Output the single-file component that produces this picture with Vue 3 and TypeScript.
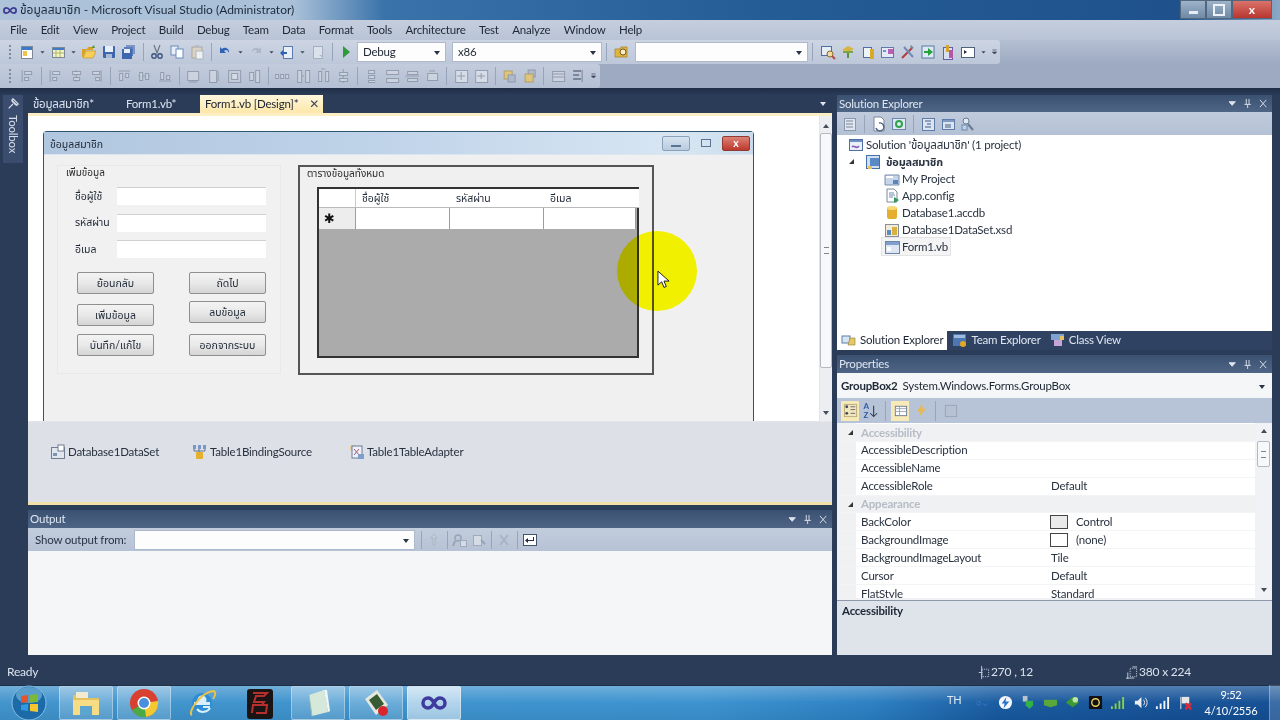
<script setup lang="ts">
const line = (x1: number, y1: number, x2: number, y2: number, c = '#7c8798', w = 1) =>
  `<path d="M${x1} ${y1}L${x2} ${y2}" stroke="${c}" stroke-width="${w}" fill="none"/>`
const box = (x: number, y: number, w: number, h: number, f = '#fff', s = '#7c8798') =>
  `<rect x="${x + 0.5}" y="${y + 0.5}" width="${w}" height="${h}" fill="${f}" stroke="${s}"/>`

const icons: Record<string, string> = {
  grip: line(8, 3, 8, 13, '#8a96aa', 2),
  dd: '<path d="M5 7h6l-3 3z" fill="#39455a"/>',
  sep: '',
  new: box(2, 2, 11, 12) + '<rect x="3" y="3" width="10" height="3" fill="#3d7cc4"/><rect x="4" y="7" width="4" height="5" fill="#f2c14e"/>',
  add: box(2, 3, 12, 10, '#f5f2c8') + '<rect x="3" y="4" width="11" height="2" fill="#3d7cc4"/>' + line(6, 6, 6, 13, '#a9b56a') + line(10, 6, 10, 13, '#a9b56a') + line(3, 9, 14, 9, '#a9b56a'),
  open: '<path d="M1 5h5l1-2h5v3H5L2 13H1z" fill="#d9a32a"/><path d="M5 7h10l-3 7H2z" fill="#f7cf57" stroke="#c08e20" stroke-width=".6"/><path d="M10 4l3-3 1 3z" fill="#5a9a3c"/>',
  save: '<rect x="2" y="2" width="12" height="12" rx="1" fill="#3e66ae"/><rect x="4" y="2" width="8" height="6" fill="#e8eef8"/><rect x="5" y="10" width="6" height="4" fill="#a8bcd8"/>',
  saveall: '<rect x="5" y="1" width="9" height="9" fill="#7d95c4"/><rect x="3" y="3" width="9" height="9" fill="#5a7dbc"/><rect x="1" y="5" width="10" height="10" fill="#3e66ae"/><rect x="3" y="5" width="6" height="4" fill="#e8eef8"/>',
  cut: '<path d="M5 1l3 8 3-8" stroke="#6d7787" stroke-width="1.2" fill="none"/><circle cx="5" cy="12" r="2.2" fill="none" stroke="#3b557f" stroke-width="1.4"/><circle cx="11" cy="12" r="2.2" fill="none" stroke="#3b557f" stroke-width="1.4"/>',
  copy: '<rect x="2" y="2" width="7" height="9" fill="#e9eef6" stroke="#6b8bbd"/><rect x="7" y="5" width="7" height="9" fill="#fff" stroke="#6b8bbd"/>',
  paste: '<rect x="3" y="3" width="10" height="11" fill="#d9d3c2" stroke="#a9a89f"/><rect x="6" y="1" width="4" height="3" fill="#b9bcc3"/><rect x="7" y="7" width="7" height="8" fill="#eef0f4" stroke="#aeb3bd"/>',
  undo: '<path d="M3 3v6h6L7 7c2-2 4-1 5 2 1-4-4-7-7-4z" fill="#2f62b3"/>',
  redo: '<path d="M13 3v6H7l2-2c-2-2-4-1-5 2-1-4 4-7 7-4z" fill="#aeb7c6"/>',
  nav: box(4, 2, 9, 12, '#e9eef7', '#5a7bb0') + '<path d="M1 9l3-3v2h4v2H4v2z" fill="#2f62b3"/>',
  page: box(3, 2, 9, 12, '#dce2ec', '#a6afbf') + '<path d="M9 11l4 3v-3z" fill="#aeb7c6"/>',
  play: '<path d="M5 2l7 6-7 6z" fill="#2f9a3a"/>',
  find: '<path d="M1 5h5l1-2h6v10H1z" fill="#e2b53e" stroke="#a37c1c" stroke-width=".7"/><circle cx="9" cy="8" r="3" fill="#f7ecc0" stroke="#6d5a28"/>',
  tools1: box(1, 2, 10, 9, '#e6edf7', '#4f6ea5') + '<circle cx="10" cy="10" r="3" fill="#f3d9a0" stroke="#8a6a2a"/>' + line(12, 12, 15, 15, '#b54a4a', 2),
  tools2: '<path d="M2 6l6-4 6 3-6 3z" fill="#d8b53c"/><rect x="7" y="7" width="2" height="7" fill="#5f8f3a"/><rect x="3" y="7" width="10" height="2" fill="#7aa34a"/>',
  tools3: box(3, 3, 8, 10, '#eef2f9', '#4f6ea5') + '<rect x="10" y="5" width="4" height="10" fill="#d8aa2c"/>',
  tools4: box(1, 3, 12, 10, '#e4e9f5', '#5f79ad') + '<path d="M8 5h5v5H8z" fill="#b761b6"/><path d="M3 6h3v2H3z" fill="#5a9ad3"/>',
  tools5: '<path d="M2 14L12 4" stroke="#b23b3b" stroke-width="2"/><path d="M4 3l9 10" stroke="#6f8bb5" stroke-width="2"/><path d="M11 1l3 3-2 1-2-2z" fill="#7d8897"/>',
  tools6: '<rect x="2" y="2" width="12" height="12" fill="#dfe8f3" stroke="#537aa8"/><path d="M4 7h4V4l5 4-5 4V9H4z" fill="#27a13a"/>',
  tools7: box(3, 3, 9, 12, '#d7e0ef', '#6b5aa5') + '<rect x="6" y="1" width="3" height="7" fill="#d6a52e"/><rect x="9" y="6" width="4" height="8" fill="#b257a8"/>',
  tools8: box(1, 3, 13, 10, '#fff', '#51617c') + '<path d="M4 6l3 2-3 2z" fill="#222c3c"/>',
  chev: '<path d="M5 5h6M5 8h6l-3 3z" stroke="#39455a" fill="#39455a"/>',
  al1: line(3, 2, 3, 14) + box(5, 3, 7, 3, '#d4dae4') + box(5, 9, 4, 3, '#d4dae4'),
  al2: line(8, 2, 8, 14) + box(4, 3, 8, 3, '#d4dae4') + box(5, 9, 6, 3, '#d4dae4'),
  al3: line(13, 2, 13, 14) + box(4, 3, 7, 3, '#d4dae4') + box(7, 9, 4, 3, '#d4dae4'),
  al4: line(2, 3, 14, 3) + box(3, 5, 3, 7, '#d4dae4') + box(9, 5, 3, 4, '#d4dae4'),
  al5: line(2, 8, 14, 8) + box(3, 4, 3, 8, '#d4dae4') + box(9, 5, 3, 6, '#d4dae4'),
  al6: line(2, 13, 14, 13) + box(3, 4, 3, 7, '#d4dae4') + box(9, 7, 3, 4, '#d4dae4'),
  sz1: box(2, 3, 11, 9, '#d4dae4') + line(4, 14, 12, 14),
  sz2: box(4, 2, 7, 12, '#d4dae4') + line(13, 3, 13, 13),
  sz3: box(2, 2, 12, 12, '#c9d0dc') + box(5, 5, 6, 6, '#e4e8ef'),
  gr: box(3, 4, 4, 8, '#d4dae4') + box(9, 2, 4, 12, '#d4dae4'),
  sp1: box(1, 6, 3, 4, '#d4dae4') + box(6, 6, 3, 4, '#d4dae4') + box(11, 6, 3, 4, '#d4dae4'),
  sp2: box(2, 2, 4, 12, '#d4dae4') + box(10, 2, 4, 12, '#d4dae4') + line(7, 8, 9, 8),
  sp3: box(3, 3, 3, 10, '#d4dae4') + box(10, 3, 3, 10, '#d4dae4') + line(6, 1, 10, 1),
  sp4: line(8, 1, 8, 15) + box(4, 4, 8, 3, '#d4dae4') + box(4, 10, 8, 3, '#d4dae4'),
  vs1: box(5, 2, 6, 3, '#d4dae4') + box(5, 7, 6, 3, '#d4dae4') + box(5, 12, 6, 2, '#d4dae4'),
  vs2: box(2, 2, 12, 4, '#d4dae4') + box(2, 10, 12, 4, '#d4dae4'),
  vs3: box(3, 3, 10, 3, '#d4dae4') + box(3, 10, 10, 3, '#d4dae4') + line(1, 8, 15, 8),
  vs4: box(3, 5, 10, 7, '#d4dae4') + line(5, 3, 11, 3),
  cen1: box(2, 2, 12, 12, '#e6eaf1') + line(8, 4, 8, 12) + line(4, 8, 12, 8),
  cen2: box(2, 2, 12, 12, '#e6eaf1') + line(4, 8, 12, 8) + line(8, 5, 8, 11),
  ord1: '<rect x="3" y="3" width="8" height="8" fill="#f0c64a" stroke="#ac8a2e"/><rect x="7" y="7" width="7" height="7" fill="#a8b4c8" stroke="#75829a"/>',
  ord2: '<rect x="6" y="2" width="7" height="7" fill="#a8b4c8" stroke="#75829a"/><rect x="3" y="6" width="8" height="8" fill="#f0c64a" stroke="#ac8a2e"/>',
  tab: box(2, 3, 12, 10, '#d4dae4') + line(2, 6, 14, 6) + line(2, 9, 14, 9),
  tab2: line(3, 3, 11, 3, '#57647a', 2) + line(3, 7, 9, 7, '#57647a', 2) + line(3, 11, 11, 11, '#57647a', 2) + line(12, 2, 12, 14, '#57647a'),
  props: box(2, 2, 11, 12, '#dfe6f1', '#8a98ae') + line(4, 5, 11, 5) + line(4, 8, 11, 8) + line(4, 11, 11, 11),
  se2: '<path d="M3 1h7l3 3v11H3z" fill="#fff" stroke="#7c8798"/><path d="M8 7a4 4 0 1 1-3 5" stroke="#50658a" fill="none" stroke-width="1.5"/>',
  se3: box(1, 2, 13, 11, '#dfe9f3', '#6c87ae') + '<circle cx="8" cy="8" r="3" fill="none" stroke="#31a24c" stroke-width="2"/>',
  se4: box(2, 2, 12, 12, '#dbe4f1', '#5f7ca8') + line(5, 5, 11, 5, '#445c82') + line(7, 8, 11, 8, '#445c82') + line(5, 11, 11, 11, '#445c82'),
  se5: box(2, 3, 12, 10, '#dbe4f1', '#5f7ca8') + '<rect x="3" y="4" width="11" height="2" fill="#7f99c2"/>' + line(5, 9, 11, 9, '#445c82') + line(5, 11, 11, 11, '#445c82'),
  se6: '<circle cx="6" cy="5" r="3" fill="#dfe9f3" stroke="#6c7a90"/>' + line(8, 8, 13, 14, '#6c7a90', 2) + '<rect x="2" y="9" width="5" height="5" fill="#bcd0e8" stroke="#6c87ae"/>',
  sln: box(1, 2, 13, 11, '#e9f0fa', '#4f6f9e') + '<rect x="2" y="3" width="12" height="2" fill="#6b8fc4"/><path d="M4 10c2-3 4 3 7-1" stroke="#8c5fb6" fill="none" stroke-width="1.6"/>',
  vb: box(1, 1, 13, 13, '#cfe0f4', '#446fa8') + '<rect x="5" y="4" width="9" height="8" fill="#5a89c6"/><rect x="3" y="12" width="4" height="3" fill="#e8c35a"/>',
  myproj: '<path d="M1 4h14v10H1z" fill="#c6d5ea" stroke="#7d90ad"/><rect x="2" y="5" width="7" height="2" fill="#fff"/><rect x="9" y="9" width="5" height="4" fill="#5d84bb"/>',
  cfg: '<path d="M3 1h7l3 3v10H3z" fill="#fff" stroke="#7c8798"/>' + line(5, 5, 10, 5, '#6d89b3') + line(5, 7, 11, 7, '#6d89b3') + line(5, 9, 9, 9, '#6d89b3') + '<path d="M10 9l5 3-5 3z" fill="#2f9a5a"/>',
  db: '<rect x="3" y="2" width="10" height="12" rx="2" fill="#e6ae2e"/><ellipse cx="8" cy="3" rx="5" ry="2" fill="#f6d875"/>',
  xsd: box(1, 2, 13, 12, '#f0ecd8', '#8a8f9d') + '<rect x="3" y="8" width="4" height="5" fill="#5b8bc4"/><rect x="8" y="5" width="5" height="8" fill="#d8b13e"/>',
  form: box(1, 2, 14, 12, '#dde6f2', '#6b86ad') + '<rect x="2" y="3" width="13" height="3" fill="#7fa0cc"/><rect x="3" y="8" width="4" height="4" fill="#fff"/>',
  seTab: '<rect x="1" y="4" width="8" height="7" fill="#d7e4f2" stroke="#5d7ea9"/><path d="M9 6h5v7H7z" fill="#e6c867" stroke="#8d7a36" stroke-width=".6"/>',
  teamTab: '<rect x="1" y="2" width="13" height="12" fill="#4c77b4"/><rect x="2" y="3" width="11" height="3" fill="#9fbce0"/><circle cx="11" cy="12" r="3" fill="#e2a823"/>',
  clsTab: '<rect x="1" y="2" width="13" height="6" fill="#7fa3d0"/><rect x="4" y="8" width="8" height="6" fill="#c7a3d8"/><rect x="10" y="4" width="4" height="4" fill="#e6c45a"/>',
  cat: box(1, 1, 13, 13, '#f2e6bd', '#b8ab7c') + '<circle cx="4" cy="4" r="1.5" fill="#445"/><circle cx="4" cy="11" r="1.5" fill="#445"/>' + line(8, 4, 13, 4, '#667') + line(8, 7, 13, 7, '#667') + line(8, 11, 13, 11, '#667'),
  grid: box(2, 3, 12, 10, '#fff', '#6c7a90') + line(2, 6, 14, 6, '#9aa7bb') + line(2, 9, 14, 9, '#9aa7bb') + line(7, 3, 7, 13, '#9aa7bb'),
  bolt: '<path d="M9 1L3 9h4l-2 6 8-9H9z" fill="#e9b94e"/>',
  pg: box(2, 2, 12, 12, '#b6c1d3', '#98a4b8'),
  ds: box(1, 3, 13, 11, '#e1e6ee', '#717d90') + '<rect x="8" y="1" width="6" height="6" fill="#fff" stroke="#717d90"/><rect x="3" y="9" width="4" height="3" fill="#7d93b3"/>',
  bs: '<rect x="1" y="1" width="3" height="4" fill="#7a96c7"/><rect x="6" y="1" width="3" height="4" fill="#7a96c7"/><rect x="11" y="1" width="3" height="4" fill="#7a96c7"/><path d="M2 5v2h11V5M7 5v3" stroke="#607590" fill="none"/><rect x="4" y="8" width="7" height="7" rx="1" fill="#e6b02c"/>',
  ta: '<circle cx="4" cy="4" r="3" fill="#f0c58a"/><rect x="3" y="2" width="10" height="12" fill="#eef1f8" stroke="#6b7c99"/><path d="M5 5l5 6M10 5l-5 6" stroke="#a0556a"/><rect x="9" y="10" width="6" height="5" fill="#7f9fca"/>',
  out1: '<path d="M8 2l3 4H9v7H7V6H5z" fill="#c6cedb" stroke="#a0aabb" stroke-width=".6"/>',
  out2: '<circle cx="6" cy="6" r="3" fill="none" stroke="#97a3b6" stroke-width="1.4"/>' + line(3, 9, 1, 14, '#97a3b6', 2) + box(8, 8, 6, 6, '#d6dce6', '#a0aabb'),
  out3: box(3, 3, 8, 10, '#d6dce6', '#a0aabb') + line(11, 8, 15, 12, '#97a3b6', 2),
  out4: line(4, 3, 12, 13, '#aab3c2', 2) + line(12, 3, 4, 13, '#aab3c2', 2),
  out5: box(1, 2, 13, 11, '#fff', '#44526a') + '<path d="M11 5v3H6V6L3 8.5 6 11V9h6V5z" fill="#1f2c44"/>',
}

const toolbar1 = ['new', 'dd', 'add', 'dd', 'open', 'save', 'saveall', 'sep', 'cut', 'copy', 'paste', 'sep', 'undo', 'dd', 'redo', 'dd', 'nav', 'dd', 'page', 'sep', 'play']
const toolbar1b = ['tools1', 'tools2', 'tools3', 'tools4', 'tools5', 'tools6', 'tools7', 'tools8']
const toolbar2 = ['al1', 'sep', 'al1', 'al2', 'al3', 'sep', 'al4', 'al5', 'al6', 'sep', 'sz1', 'sz2', 'sz3', 'gr', 'sep', 'sp1', 'sp2', 'sp3', 'sp4', 'sep', 'vs1', 'vs2', 'vs3', 'vs4', 'sep', 'cen1', 'cen2', 'sep', 'ord1', 'ord2', 'sep', 'tab', 'tab2']
const menu = ['File', 'Edit', 'View', 'Project', 'Build', 'Debug', 'Team', 'Data', 'Format', 'Tools', 'Architecture', 'Test', 'Analyze', 'Window', 'Help']
const seTools = ['props', 'sep', 'se2', 'se3', 'sep', 'se4', 'se5', 'se6']

const tree = [
  { icon: 'myproj', label: 'My Project', sel: false },
  { icon: 'cfg', label: 'App.config', sel: false },
  { icon: 'db', label: 'Database1.accdb', sel: false },
  { icon: 'xsd', label: 'Database1DataSet.xsd', sel: false },
  { icon: 'form', label: 'Form1.vb', sel: true },
]

const fields = ['ชื่อผู้ใช้', 'รหัสผ่าน', 'อีเมล']
const leftButtons = ['ย้อนกลับ', 'เพิ่มข้อมูล', 'บันทึก/แก้ไข']
const rightButtons = ['ถัดไป', 'ลบข้อมูล', 'ออกจากระบบ']

const trayComps = [
  { icon: 'ds', label: 'Database1DataSet' },
  { icon: 'bs', label: 'Table1BindingSource' },
  { icon: 'ta', label: 'Table1TableAdapter' },
]

type PropRow = { cat?: boolean; name: string; value?: string; swatch?: string }
const propRows: PropRow[] = [
  { cat: true, name: 'Accessibility' },
  { name: 'AccessibleDescription' },
  { name: 'AccessibleName' },
  { name: 'AccessibleRole', value: 'Default' },
  { cat: true, name: 'Appearance' },
  { name: 'BackColor', value: 'Control', swatch: 'ctl' },
  { name: 'BackgroundImage', value: '(none)', swatch: 'none' },
  { name: 'BackgroundImageLayout', value: 'Tile' },
  { name: 'Cursor', value: 'Default' },
  { name: 'FlatStyle', value: 'Standard' },
]

const taskApps = [
  { name: 'folder', on: true },
  { name: 'chrome', on: true },
  { name: 'ie', on: false },
  { name: 'game', on: false },
  { name: 'note', on: true },
  { name: 'photo', on: true },
  { name: 'vs', on: true, active: true },
]
</script>

<template>
  <div class="ide">
    <header class="titlebar">
      <svg class="vs-logo" viewBox="0 0 16 10"><path d="M4 2c2 0 3 1.500 4 3s2 3 4 3a3 3 0 0 0 0-6c-2 0-3 1.500-4 3S6 8 4 8a3 3 0 0 1 0-6z" fill="none" stroke="#3f3a94" stroke-width="2"/></svg>
      <span class="title-text">ข้อมูลสมาชิก - Microsoft Visual Studio (Administrator)</span>
      <div class="winbtns">
        <span class="wb"><i class="wb-min"></i></span>
        <span class="wb"><i class="wb-max"></i></span>
        <span class="wb wb-close">x</span>
      </div>
    </header>

    <nav class="menubar">
      <span v-for="m in menu" :key="m">{{ m }}</span>
    </nav>

    <div class="toolrow row1">
      <div class="band">
        <i class="grip"></i>
        <template v-for="(t, i) in toolbar1" :key="i">
          <i v-if="t === 'sep'" class="sep"></i>
          <svg v-else class="ic" :class="{ small: t === 'dd' }" viewBox="0 0 16 16" v-html="icons[t]"></svg>
        </template>
        <div class="combo debug">Debug<b class="arrow"></b></div>
        <div class="combo x86">x86<b class="arrow"></b></div>
        <i class="sep wide"></i>
        <svg class="ic" viewBox="0 0 16 16" v-html="icons.find"></svg>
        <div class="combo search"><b class="arrow"></b></div>
        <i class="sep wide"></i>
        <svg v-for="t in toolbar1b" :key="t" class="ic" viewBox="0 0 16 16" v-html="icons[t]"></svg>
        <svg class="ic small" viewBox="0 0 16 16" v-html="icons.dd"></svg>
        <svg class="ic small" viewBox="0 0 16 16" v-html="icons.chev"></svg>
      </div>
    </div>

    <div class="toolrow row2">
      <div class="band">
        <i class="grip"></i>
        <template v-for="(t, i) in toolbar2" :key="i">
          <i v-if="t === 'sep'" class="sep"></i>
          <svg v-else class="ic" viewBox="0 0 16 16" v-html="icons[t]"></svg>
        </template>
        <svg class="ic small" viewBox="0 0 16 16" v-html="icons.chev"></svg>
      </div>
    </div>

    <main class="workspace">
      <aside class="toolstrip">
        <div class="strip-box">
          <svg class="strip-pin" viewBox="0 0 16 16"><path d="M3 13L8 8M6 3l7 7M8 2l6 6-3 1-4-4z" stroke="#d8dfea" stroke-width="1.300" fill="none"/></svg>
          <span class="strip-label">Toolbox</span>
        </div>
      </aside>

      <section class="center">
        <div class="tabs">
          <span class="tab">ข้อมูลสมาชิก*</span>
          <span class="tab">Form1.vb*</span>
          <span class="tab active">Form1.vb [Design]*<b class="tab-x">✕</b></span>
          <i class="tab-menu"></i>
        </div>

        <div class="doc">
          <div class="designer">
            <div class="canvas">
              <div class="form">
                <div class="form-title">
                  <span>ข้อมูลสมาชิก</span>
                  <div class="form-btns">
                    <span class="fb"><i class="fb-min"></i></span>
                    <span class="fb plain"><i class="fb-max"></i></span>
                    <span class="fb close">x</span>
                  </div>
                </div>
                <div class="form-body">
                  <div class="group-a">
                    <div class="group-title">เพิ่มข้อมูล</div>
                    <div class="fields">
                      <div v-for="f in fields" :key="f" class="field">
                        <label>{{ f }}</label>
                        <span class="input"></span>
                      </div>
                    </div>
                    <div class="btn-cols">
                      <div class="btn-col col-a">
                        <span v-for="b in leftButtons" :key="b" class="wbtn">{{ b }}</span>
                      </div>
                      <div class="btn-col col-b">
                        <span v-for="b in rightButtons" :key="b" class="wbtn">{{ b }}</span>
                      </div>
                    </div>
                  </div>

                  <div class="group-b">
                    <div class="group-title">ตารางข้อมูลทั้งหมด</div>
                    <div class="dgv">
                      <div class="dgv-row head">
                        <span class="rh"></span>
                        <span>ชื่อผู้ใช้</span>
                        <span>รหัสผ่าน</span>
                        <span>อีเมล</span>
                      </div>
                      <div class="dgv-row body">
                        <span class="rh star">✱</span>
                        <span></span>
                        <span></span>
                        <span></span>
                      </div>
                    </div>
                  </div>
                </div>
              </div>
            </div>
            <div class="vscroll">
              <b class="up"></b>
              <div class="thumb"><i></i></div>
              <b class="down"></b>
            </div>
          </div>
          <div class="tray">
            <span v-for="c in trayComps" :key="c.label" class="tray-item">
              <svg class="ic" viewBox="0 0 16 16" v-html="icons[c.icon]"></svg>{{ c.label }}
            </span>
          </div>
        </div>

        <div class="pane output">
          <div class="pane-head">
            <span>Output</span>
            <svg class="pane-btns" viewBox="0 0 44 12"><path d="M0 4h7l-3.500 4zM19 1v6M22 1v6M17 7h7M20.500 7v4M34 2l7 8M41 2l-7 8" fill="#dfe5ef" stroke="#dfe5ef"/></svg>
          </div>
          <div class="out-tools">
            <span class="out-label">Show output from:</span>
            <div class="combo out-combo"><b class="arrow"></b></div>
            <i class="sep"></i>
            <svg class="ic" viewBox="0 0 16 16" v-html="icons.out1"></svg>
            <i class="sep"></i>
            <svg class="ic" viewBox="0 0 16 16" v-html="icons.out2"></svg>
            <svg class="ic" viewBox="0 0 16 16" v-html="icons.out3"></svg>
            <i class="sep"></i>
            <svg class="ic" viewBox="0 0 16 16" v-html="icons.out4"></svg>
            <i class="sep"></i>
            <svg class="ic" viewBox="0 0 16 16" v-html="icons.out5"></svg>
          </div>
          <div class="out-text"></div>
        </div>
      </section>

      <section class="side">
        <div class="pane explorer">
          <div class="pane-head">
            <span>Solution Explorer</span>
            <svg class="pane-btns" viewBox="0 0 44 12"><path d="M0 4h7l-3.500 4zM19 1v6M22 1v6M17 7h7M20.500 7v4M34 2l7 8M41 2l-7 8" fill="#dfe5ef" stroke="#dfe5ef"/></svg>
          </div>
          <div class="se-tools">
            <template v-for="(t, i) in seTools" :key="i">
              <i v-if="t === 'sep'" class="sep"></i>
              <svg v-else class="ic" viewBox="0 0 16 16" v-html="icons[t]"></svg>
            </template>
          </div>
          <div class="tree">
            <div class="node sln-node">
              <svg class="ic" viewBox="0 0 16 16" v-html="icons.sln"></svg>
              <span>Solution 'ข้อมูลสมาชิก' (1 project)</span>
            </div>
            <div class="node proj-node">
              <i class="expand"></i>
              <svg class="ic" viewBox="0 0 16 16" v-html="icons.vb"></svg>
              <strong>ข้อมูลสมาชิก</strong>
            </div>
            <div v-for="n in tree" :key="n.label" class="node leaf" :class="{ sel: n.sel }">
              <svg class="ic" viewBox="0 0 16 16" v-html="icons[n.icon]"></svg>
              <span>{{ n.label }}</span>
            </div>
          </div>
          <div class="se-tabs">
            <span class="se-tab active"><svg class="ic" viewBox="0 0 16 16" v-html="icons.seTab"></svg>Solution Explorer</span>
            <span class="se-tab"><svg class="ic" viewBox="0 0 16 16" v-html="icons.teamTab"></svg>Team Explorer</span>
            <span class="se-tab"><svg class="ic" viewBox="0 0 16 16" v-html="icons.clsTab"></svg>Class View</span>
          </div>
        </div>

        <div class="pane props">
          <div class="pane-head">
            <span>Properties</span>
            <svg class="pane-btns" viewBox="0 0 44 12"><path d="M0 4h7l-3.500 4zM19 1v6M22 1v6M17 7h7M20.500 7v4M34 2l7 8M41 2l-7 8" fill="#dfe5ef" stroke="#dfe5ef"/></svg>
          </div>
          <div class="prop-target">
            <strong>GroupBox2</strong>
            <span>System.Windows.Forms.GroupBox</span>
            <b class="arrow"></b>
          </div>
          <div class="prop-tools">
            <span class="pt on"><svg class="ic" viewBox="0 0 16 16" v-html="icons.cat"></svg></span>
            <span class="pt az"><em>A<br />Z</em>↓</span>
            <i class="sep"></i>
            <span class="pt on"><svg class="ic" viewBox="0 0 16 16" v-html="icons.grid"></svg></span>
            <span class="pt"><svg class="ic" viewBox="0 0 16 16" v-html="icons.bolt"></svg></span>
            <i class="sep"></i>
            <span class="pt"><svg class="ic" viewBox="0 0 16 16" v-html="icons.pg"></svg></span>
          </div>
          <div class="prop-grid">
            <div class="prop-list">
              <div v-for="r in propRows" :key="r.name" class="prop-row" :class="{ cat: r.cat }">
                <i v-if="r.cat" class="expand"></i>
                <span class="prop-name">{{ r.name }}</span>
                <span v-if="!r.cat" class="prop-value">
                  <i v-if="r.swatch" class="swatch" :class="r.swatch"></i>{{ r.value }}
                </span>
              </div>
            </div>
            <div class="prop-scroll">
              <b class="up"></b>
              <div class="thumb"><i></i></div>
              <b class="down"></b>
            </div>
          </div>
          <div class="prop-desc"><strong>Accessibility</strong></div>
        </div>
      </section>
    </main>

    <footer class="statusbar">
      <span class="st-ready">Ready</span>
      <span class="st-pos">
        <svg class="st-ic" viewBox="0 0 12 16"><path d="M4 1v14M1 8h3" stroke="#c6d0de" fill="none"/><rect x="4.500" y="4.500" width="7" height="8" fill="none" stroke="#c6d0de" stroke-dasharray="1 1"/></svg>270 , 12
      </span>
      <span class="st-size">
        <svg class="st-ic" viewBox="0 0 14 16"><path d="M1 14h9M3 8v7M8 2h5" stroke="#c6d0de" fill="none"/><rect x="5.500" y="3.500" width="7" height="9" fill="none" stroke="#c6d0de" stroke-dasharray="1 1"/></svg>380 x 224
      </span>
    </footer>

    <div class="taskbar">
      <svg class="orb" viewBox="0 0 36 36">
        <circle cx="18" cy="18" r="17" fill="#1c6aa8" stroke="#86c0e2"/>
        <ellipse cx="18" cy="10" rx="13" ry="8" fill="#8cc6e8" opacity=".55"/>
        <path d="M10 11l7-1v7l-7 1z" fill="#e4552f"/>
        <path d="M19 10l8-1v8l-8 .500z" fill="#7cb93b"/>
        <path d="M10 20l7-1v7l-7-1z" fill="#2f9ae0"/>
        <path d="M19 19l8 0v8l-8-1z" fill="#f7c52e"/>
      </svg>
      <div class="apps">
        <span v-for="a in taskApps" :key="a.name" class="app" :class="{ on: a.on, active: a.active }">
          <svg v-if="a.name === 'folder'" viewBox="0 0 32 32"><path d="M3 8h10l2 3h14v17H3z" fill="#e4c35e"/><path d="M6 5h12v6H6z" fill="#f3ead0"/><path d="M3 13h26v15H3z" fill="#f6dc84"/><rect x="10" y="19" width="12" height="9" fill="#5aa6d0"/></svg>
          <svg v-else-if="a.name === 'chrome'" viewBox="0 0 32 32"><circle cx="16" cy="16" r="14" fill="#d8402f"/><path d="M16 16L4 23a14 14 0 0 0 14 7z" fill="#4caa46"/><path d="M16 16l2 14a14 14 0 0 0 12-16z" fill="#f3c92f"/><circle cx="16" cy="16" r="6.500" fill="#fff"/><circle cx="16" cy="16" r="5" fill="#4a8fdc"/></svg>
          <svg v-else-if="a.name === 'ie'" viewBox="0 0 32 32"><circle cx="16" cy="16" r="10" fill="#2c8cd6"/><circle cx="16" cy="13" r="4.500" fill="#d8effb"/><rect x="8" y="15" width="16" height="3" fill="#d8effb"/><path d="M24 20h-7M11 22a8 8 0 0 0 13-1" stroke="#d8effb" stroke-width="2" fill="none"/><path d="M6 28C1 26 14 6 27 4c3 0 3 4 0 8" stroke="#e8c24a" stroke-width="2" fill="none"/></svg>
          <svg v-else-if="a.name === 'game'" viewBox="0 0 32 32"><rect x="3" y="2" width="26" height="30" rx="3" fill="#1b1414"/><path d="M9 6h14l-3 3h-8l-2 6h10l-2 3H9l-1 8M14 18h9l-1 8H12" stroke="#b5302c" stroke-width="2" fill="none"/></svg>
          <svg v-else-if="a.name === 'note'" viewBox="0 0 32 32"><path d="M7 8l15-5 4 22-16 4z" fill="#d5e8da"/><path d="M22 3l4 22 2-1-3-21z" fill="#f2f6f3"/><path d="M7 8l3 21" stroke="#9dbdb0"/></svg>
          <svg v-else-if="a.name === 'photo'" viewBox="0 0 32 32"><path d="M5 12L17 3l11 15-12 10z" fill="#e6e8de"/><path d="M9 13l8-6 7 10-8 6z" fill="#375c33"/><circle cx="23" cy="24" r="5" fill="#d8262c"/></svg>
          <svg v-else viewBox="0 0 32 32"><path d="M10 11c3 0 5 3 6 5s3 5 6 5a5 5 0 0 0 0-10c-3 0-5 3-6 5s-3 5-6 5a5 5 0 0 1 0-10z" fill="none" stroke="#3f3a9e" stroke-width="3.500"/></svg>
        </span>
      </div>
      <div class="tray-area">
        <span class="lang">TH</span>
        <svg class="sys" viewBox="0 0 16 16"><path d="M2 9a2 2 0 1 0 4 0a2 2 0 1 0-4 0M9 9a2 2 0 1 0 4 0" stroke="#3b78c2" fill="none"/></svg>
        <svg class="sys" viewBox="0 0 16 16"><circle cx="8" cy="8" r="7" fill="#f2f6fb"/><path d="M9 2L4 9h3l-1 5 6-7H8z" fill="#2673c6"/></svg>
        <svg class="sys" viewBox="0 0 16 16"><rect x="3" y="1" width="5" height="6" fill="#b8c3cf"/><path d="M6 6h8v5l-4 4-4-4z" fill="#33b04a"/></svg>
        <svg class="sys" viewBox="0 0 16 16"><path d="M1 5h14v6l-7 2-7-2z" fill="#5aa83a"/></svg>
        <svg class="sys" viewBox="0 0 16 16"><path d="M1 8l7-6 7 6-7 5z" fill="#3c9a33"/><circle cx="11" cy="5" r="3" fill="#bfe3a8"/></svg>
        <svg class="sys" viewBox="0 0 16 16"><rect x="1" y="1" width="14" height="14" rx="1" fill="#111"/><circle cx="8" cy="8" r="4" fill="none" stroke="#e7d36a" stroke-width="1.500"/></svg>
        <svg class="sys" viewBox="0 0 16 16"><path d="M1 12h2v3H1zM5 9h2v6H5zM9 6h2v9H9zM13 2h2v13h-2z" fill="#86d04c"/></svg>
        <svg class="sys" viewBox="0 0 16 16"><path d="M2 6h3l4-4v12l-4-4H2z" fill="#e8edf3"/><path d="M11 5a4 4 0 0 1 0 6M13 3a7 7 0 0 1 0 10" stroke="#e8edf3" fill="none"/></svg>
        <svg class="sys" viewBox="0 0 16 16"><path d="M1 12h2v3H1zM5 9h2v6H5zM9 6h2v9H9zM13 2h2v13h-2z" fill="#f2f5f9"/></svg>
        <svg class="sys" viewBox="0 0 16 16"><path d="M3 2v13" stroke="#eee"/><path d="M4 2h8v7H4z" fill="#e6e6e6"/><path d="M8 9l6 6M14 9l-6 6" stroke="#e12a35" stroke-width="2.500"/></svg>
        <span class="clock">9:52<br />4/10/2556</span>
        <i class="show-desktop"></i>
      </div>
    </div>

    <div class="spotlight"></div>
    <svg class="pointer" viewBox="0 0 14 20"><path d="M1 1v15l4-3.500 2.500 6 2.500-1-2.500-5.800H13z" fill="#fff" stroke="#111" stroke-width="1"/></svg>
  </div>
</template>

<style>
html,
body {
  margin: 0;
  background: #2b3c59;
}
</style>

<style scoped>
.ide {
  position: relative;
  width: 1280px;
  height: 720px;
  overflow: hidden;
  display: flex;
  flex-direction: column;
  background: #2b3c59;
  color: #1e2735;
  font: 11.5px/1.2 Lato, "Noto Sans", "Noto Sans Thai", "DejaVu Sans", sans-serif;
  letter-spacing: -0.2px;
}

svg {
  display: block;
}

.ic {
  width: 16px;
  height: 16px;
  flex: none;
}

.titlebar {
  height: 20px;
  display: flex;
  align-items: center;
  padding-left: 3px;
  font-size: 12px;
  letter-spacing: 0;
  background: linear-gradient(90deg, #aec3da 0, #a9c0d8 23%, #3a73aa 30%, #245c96 60%, #1f528c 92%, #8ba9c7 100%);
  color: #1b2a3a;
}

.vs-logo {
  width: 14px;
  height: 9px;
  margin-right: 3px;
}

.winbtns {
  margin-left: auto;
  margin-right: 8px;
  display: flex;
  align-self: flex-start;
  height: 19px;
}

.wb {
  width: 26px;
  display: flex;
  align-items: center;
  justify-content: center;
  background: linear-gradient(#9db3c9, #6f8aa6);
  border: 1px solid #52667e;
  box-sizing: border-box;
}

.wb-min {
  width: 9px;
  height: 3px;
  background: #e6ecf3;
  margin-top: 5px;
}

.wb-max {
  width: 8px;
  height: 8px;
  border: 2px solid #eef2f7;
}

.wb-close {
  width: 40px;
  background: linear-gradient(#d9736a, #b8362f);
  color: #fff;
  font-weight: 700;
  line-height: 1;
}

.menubar {
  height: 20px;
  display: flex;
  align-items: center;
  padding-left: 10px;
  background: linear-gradient(#c4cedd, #b9c4d6);
}

.menubar span {
  margin-right: 13.4px;
}

.toolrow {
  height: 24px;
  background: #9daac1;
  display: flex;
}

.row1 {
  background: linear-gradient(#b4bfd2, #9daac1);
}

.band {
  height: 24px;
  display: flex;
  align-items: center;
  background: linear-gradient(#cdd5e3, #bcc7d9);
  padding-left: 9px;
  border-radius: 0 3px 3px 0;
}

.row2 .band {
  background: linear-gradient(#c3ccdc, #b3bfd3);
  width: 591px;
}

.band .ic {
  width: 20px;
  height: 16px;
}

.row2 .ic {
  opacity: 0.65;
  width: 20.3px;
}

.band .ic.small {
  width: 11px;
  height: 16px;
  opacity: 1;
}

.grip {
  width: 2px;
  height: 14px;
  margin-right: 4px;
  border-left: 2px dotted #7d8aa0;
}

.sep {
  width: 1px;
  height: 18px;
  margin: 0 3.500px;
  background: #97a5bb;
  flex: none;
}

.sep.wide {
  margin: 0 5px;
}

.combo {
  position: relative;
  height: 18px;
  line-height: 18px;
  background: #fdfdfe;
  box-sizing: border-box;
  padding-left: 5px;
  flex: none;
  box-shadow: 0 0 0 1px #aeb9cb;
}

.arrow {
  position: absolute;
  right: 5px;
  top: 8px;
  border: 3px solid transparent;
  border-top: 4px solid #2a3444;
  border-bottom: 0;
}

.debug {
  width: 87px;
  margin-left: 2px;
  margin-right: 8px;
}

.x86 {
  width: 148px;
}

.search {
  width: 171px;
  margin-left: 4px;
}

.workspace {
  flex: none;
  height: 572px;
  display: flex;
  background: linear-gradient(#1f2d45 0, #2b3c59 7px);
}

.toolstrip {
  width: 28px;
  flex: none;
  padding-top: 7px;
  box-sizing: border-box;
}

.strip-box {
  margin-left: 3px;
  width: 20px;
  height: 68px;
  background: #3a4d6e;
  display: flex;
  flex-direction: column;
  align-items: center;
  color: #d8dfea;
}

.strip-pin {
  width: 14px;
  height: 14px;
  margin-top: 2px;
}

.strip-label {
  writing-mode: vertical-rl;
  margin-top: 4px;
  font-size: 11.5px;
}

.center {
  width: 804px;
  flex: none;
  padding-top: 7px;
  display: flex;
  flex-direction: column;
  gap: 5px;
}

.tabs {
  height: 18px;
  display: grid;
  grid-template-columns: 93px 79px 123px 1fr;
  align-items: center;
  margin-bottom: -5px;
  color: #dde4ee;
}

.tab {
  padding-left: 5px;
  line-height: 18px;
}

.tab.active {
  display: flex;
  align-items: center;
  justify-content: space-between;
  padding-right: 4px;
  background: linear-gradient(#fff7dd, #fde7a9);
  color: #1c2330;
  white-space: nowrap;
}

.tab-x {
  font-weight: 400;
  font-size: 12px;
  color: #3c4758;
}

.tab-menu {
  justify-self: end;
  margin-right: 6px;
  border: 3.500px solid transparent;
  border-top: 4px solid #dde4ee;
  border-bottom: 0;
}

.doc {
  height: 392px;
  border-top: 3px solid #fdeec4;
  border-bottom: 3px solid #f2dfa8;
  box-sizing: border-box;
  display: flex;
  flex-direction: column;
}

.designer {
  height: 306px;
  flex: none;
  display: flex;
  background: #fff;
  overflow: hidden;
  border-bottom: 1px solid #e3e5ea;
  box-sizing: border-box;
}

.canvas {
  width: 792px;
  flex: none;
  padding: 15px 0 0 15px;
  box-sizing: border-box;
}

.form {
  width: 711px;
  height: 340px;
  border: 1px solid #2f566f;
  border-bottom: 0;
  border-radius: 4px 4px 0 0;
  box-sizing: border-box;
  background: #f0f0f0;
  letter-spacing: 0;
}

.form-title {
  height: 23px;
  display: flex;
  align-items: center;
  padding-left: 6px;
  box-sizing: border-box;
  font-size: 10.5px;
  background: linear-gradient(90deg, #b1c7df, #bed2e8 45%, #d8e6f3 90%, #c9dbeb);
  border-bottom: 1px solid #dbe6f0;
}

.form-title > span {
  padding-top: 2px;
}

.form-btns {
  margin-left: auto;
  margin-right: 3px;
  display: flex;
  gap: 2px;
}

.fb {
  width: 28px;
  height: 15px;
  border: 1px solid #8aa1ba;
  border-radius: 2px;
  box-sizing: border-box;
  display: flex;
  align-items: center;
  justify-content: center;
  background: linear-gradient(#d7e3ef, #b9cbdf);
}

.fb.plain {
  border-color: transparent;
  background: transparent;
}

.fb.close {
  background: linear-gradient(#dc8277, #bd382e);
  border-color: #8f3b34;
  color: #fff;
  font-weight: 700;
  line-height: 1;
}

.fb-min {
  width: 10px;
  height: 2px;
  margin-top: 6px;
  background: #5a7390;
}

.fb-max {
  width: 8px;
  height: 6px;
  border: 1px solid #5a7390;
}

.form-body {
  display: flex;
  align-items: flex-start;
  padding: 10px 0 0 13px;
}

.group-a {
  width: 224px;
  height: 209px;
  border: 1px solid #e9e9e9;
  background: #f1f1f1;
  box-sizing: border-box;
  margin-right: 17px;
}

.group-title {
  height: 13px;
  line-height: 12px;
  font-size: 10px;
  padding-left: 8px;
  color: #2b2b2b;
  white-space: nowrap;
}

.fields {
  margin-top: 8px;
  display: flex;
  flex-direction: column;
  gap: 8.500px;
}

.field {
  display: flex;
  align-items: center;
  height: 18px;
  padding-left: 17px;
  font-size: 10.5px;
}

.field label {
  width: 42px;
}

.input {
  width: 149px;
  height: 18px;
  background: #fff;
  border-top: 1px solid #d0d0d0;
  box-sizing: border-box;
}

.btn-cols {
  margin-top: 14px;
  padding-left: 19px;
  display: flex;
  gap: 35px;
}

.btn-col {
  display: flex;
  flex-direction: column;
  width: 77px;
  flex: none;
}

.wbtn {
  height: 22px;
  line-height: 20px;
  text-align: center;
  font-size: 10.5px;
  white-space: nowrap;
  border: 1px solid #8f8f8f;
  border-radius: 2px;
  box-sizing: border-box;
  background: linear-gradient(#f3f3f3, #e9e9e9 50%, #d4d4d4);
}

.col-a .wbtn:nth-child(2) {
  margin: 10px 0 8px;
}

.col-b .wbtn:nth-child(2) {
  margin: 7px 0 11px;
}

.group-b {
  width: 356px;
  height: 210px;
  border: 2px solid #555;
  box-sizing: border-box;
}

.group-b .group-title {
  padding-left: 7px;
}

.dgv {
  width: 322px;
  height: 171px;
  margin: 7px 0 0 17px;
  border: 2px solid #333;
  box-sizing: border-box;
  background: #ababab;
  font-size: 10.5px;
}

.dgv-row {
  display: grid;
  grid-template-columns: 37px 94px 94px 92px;
  width: 317px;
}

.dgv-row span {
  padding-left: 6px;
  border-right: 1px solid #c5c5c5;
  box-sizing: border-box;
}

.head {
  height: 19px;
  line-height: 18px;
  background: #fff;
  width: 320px;
  border-bottom: 1px solid #bbb;
  box-sizing: border-box;
}

.head span {
  border-right: 0;
}

.head .rh {
  border-right: 1px solid #ccc;
}

.body {
  height: 21px;
  background: #fff;
}

.body .rh {
  background: #ededed;
  padding: 0;
}

.body span {
  border-right: 1px solid #9c9c9c;
}

.dgv-row .star {
  padding-left: 5px;
  line-height: 21px;
  font-size: 13px;
  color: #111;
}

.vscroll {
  width: 12px;
  flex: none;
  margin-left: -1px;
  display: flex;
  flex-direction: column;
  align-items: center;
  padding: 8px 0 6px;
  background: #eceef2;
  border-left: 1px solid #e1e4ea;
}

.thumb {
  box-sizing: border-box;
  width: 100%;
  border: 1px solid #b4b9c2;
  border-radius: 2px;
  background: #f7f8fa;
  display: flex;
  align-items: center;
  justify-content: center;
}

.vscroll .thumb {
  flex: none;
  height: 235px;
  margin: 5px 0 auto;
}

.thumb i {
  width: 5px;
  height: 5px;
  border-top: 1px solid #7d8490;
  border-bottom: 1px solid #7d8490;
}

.up,
.down {
  border: 3px solid transparent;
  flex: none;
}

.up {
  border-bottom: 4px solid #444c59;
  border-top: 0;
}

.down {
  border-top: 4px solid #444c59;
  border-bottom: 0;
}

.tray {
  flex: 1;
  background: #dde0e7;
  display: flex;
  padding: 22px 0 0 22px;
  color: #28313f;
}

.tray-item {
  display: flex;
  align-items: center;
  height: 16px;
  gap: 2px;
}

.tray-item:nth-child(1) {
  width: 142px;
}

.tray-item:nth-child(2) {
  width: 157px;
}

.pane {
  display: flex;
  flex-direction: column;
}

.pane-head {
  height: 17px;
  flex: none;
  display: flex;
  align-items: center;
  justify-content: space-between;
  padding: 0 3px 0 2px;
  color: #dfe6f0;
  background: linear-gradient(#3b5172, #4f6585);
}

.pane-btns {
  width: 40px;
  height: 11px;
}

.output {
  height: 145px;
}

.output .pane-head {
  height: 18px;
}

.out-tools {
  height: 23px;
  flex: none;
  display: flex;
  align-items: center;
  padding-left: 7px;
  background: linear-gradient(#c2ccdc, #b6c2d5);
  color: #2a3444;
}

.out-label {
  width: 100px;
  white-space: nowrap;
}

.out-combo {
  width: 279px;
  margin-right: 3px;
}

.out-tools .ic {
  width: 18px;
}

.out-text {
  flex: 1;
  background: #f5f6f8;
}

.side {
  width: 435px;
  flex: none;
  margin-left: 5px;
  padding-top: 7px;
  display: flex;
  flex-direction: column;
  gap: 5px;
}

.explorer {
  height: 255px;
}

.se-tools {
  height: 23px;
  flex: none;
  display: flex;
  align-items: center;
  padding-left: 5px;
  gap: 4px;
  background: linear-gradient(#c0cbdc, #b4c0d4);
}

.se-tools .sep {
  margin: 0 2px;
}

.tree {
  flex: 1;
  background: #fff;
  padding-top: 1px;
}

.node {
  height: 17px;
  display: flex;
  align-items: center;
  gap: 2px;
  color: #2a3340;
}

.sln-node {
  padding-left: 11px;
}

.proj-node {
  padding-left: 12px;
  gap: 4px;
}

.proj-node .ic {
  margin-left: 7px;
}

.proj-node strong {
  font-size: 11px;
  margin-left: 1px;
}

.expand {
  width: 0;
  height: 0;
  flex: none;
  border-left: 5px solid transparent;
  border-bottom: 5px solid #333;
}

.leaf {
  padding-left: 47px;
}

.leaf.sel span {
  padding-right: 2px;
}

.leaf.sel {
  width: fit-content;
  box-sizing: border-box;
  margin-left: 45px;
  padding-left: 2px;
  background: #f4f4f5;
  outline: 1px solid #e4e4e6;
}

.se-tabs {
  height: 19px;
  flex: none;
  display: flex;
  color: #dfe6f0;
  background: #2f4261;
}

.se-tab {
  display: flex;
  align-items: center;
  gap: 3px;
  padding: 0 4px 2px;
  margin-right: 1px;
}

.se-tab.active {
  background: #fff;
  color: #1d2634;
}

.props {
  height: 300px;
}

.props .pane-head {
  height: 18px;
}

.prop-target {
  position: relative;
  height: 25px;
  flex: none;
  display: flex;
  align-items: center;
  gap: 5px;
  padding-left: 4px;
  background: #f5f6f8;
}

.prop-target .arrow {
  top: 12px;
  right: 7px;
}

.prop-tools {
  height: 25px;
  flex: none;
  display: flex;
  align-items: center;
  padding-left: 4px;
  background: #b7c3d7;
}

.pt {
  width: 18px;
  height: 20px;
  display: flex;
  align-items: center;
  justify-content: center;
  margin-right: 3px;
  box-sizing: border-box;
  font-size: 13px;
  color: #303a4c;
}

.pt em {
  font-style: normal;
  font-size: 8px;
  line-height: 9px;
  color: #2d5aa6;
  font-weight: 700;
}

.pt.on {
  background: #f8eab8;
}

.prop-tools .sep {
  margin: 0 5px 0 2px;
  height: 20px;
}

.prop-tools .ic {
  width: 15px;
  height: 15px;
}

.prop-grid {
  height: 175px;
  flex: none;
  display: flex;
  overflow: hidden;
  background: #fff;
}

.prop-list {
  flex: 1;
  padding-top: 1px;
  background: linear-gradient(90deg, #f0f1f3 19px, #fff 19px);
}

.prop-row {
  height: 17.900px;
  display: flex;
  align-items: center;
  color: #2a3340;
  padding-left: 24px;
  border-bottom: 1px solid #f3f4f6;
  box-sizing: border-box;
}

.prop-row.cat {
  background: #f0f1f3;
  color: #b6bcc6;
  font-weight: 700;
  padding-left: 11px;
}

.prop-row .expand {
  margin-right: 8px;
}

.prop-name {
  width: 190px;
  flex: none;
}

.prop-value {
  display: flex;
  align-items: center;
}

.swatch {
  width: 18px;
  height: 14px;
  margin: 0 8px 0 -1px;
  border: 1px solid #444;
  box-sizing: border-box;
  background: #fff;
}

.swatch.ctl {
  background: #eaeaea;
}

.prop-scroll {
  width: 17px;
  flex: none;
  display: flex;
  flex-direction: column;
  align-items: center;
  padding: 6px 0;
  background: #f1f2f5;
  box-sizing: border-box;
}

.prop-scroll .thumb {
  flex: none;
  height: 26px;
  width: 13px;
  margin: 8px 0 auto;
}

.prop-desc {
  flex: 1;
  padding: 4px 0 0 5px;
  background: #dfe3ea;
  border-top: 2px solid #eff1f4;
  box-shadow: inset 0 1px 0 #8e99ab;
}

.statusbar {
  height: 25px;
  flex: none;
  display: flex;
  align-items: center;
  color: #dbe2ec;
  font-size: 12px;
}

.st-ready {
  flex: 1;
  padding-left: 7px;
}

.st-pos,
.st-size {
  display: flex;
  align-items: center;
  gap: 1px;
}

.st-pos {
  width: 148px;
}

.st-size {
  width: 155px;
}

.st-ic {
  width: 13px;
  height: 15px;
}

.taskbar {
  height: 35px;
  flex: none;
  display: flex;
  align-items: stretch;
  background:
    linear-gradient(rgba(255, 255, 255, 0.28), rgba(255, 255, 255, 0.02) 50%, rgba(0, 0, 0, 0.06)),
    linear-gradient(90deg, #3f93cc, #3a92cf 55%, #2a7fc2 68%, #17599f 78%, #134e93);
  box-shadow: inset 0 1px 0 #1f2f48;
}

.orb {
  width: 36px;
  height: 36px;
  margin: 0 12px 0 11px;
  flex: none;
}

.apps {
  display: flex;
  gap: 4px;
  padding-top: 1px;
}

.app {
  width: 54px;
  display: flex;
  align-items: center;
  justify-content: center;
  box-sizing: border-box;
  border: 1px solid transparent;
}

.app svg {
  width: 32px;
  height: 32px;
}

.app.on {
  border-color: rgba(255, 255, 255, 0.35);
  border-radius: 2px;
  background: linear-gradient(rgba(255, 255, 255, 0.32), rgba(255, 255, 255, 0.14));
}

.app.active {
  background: linear-gradient(rgba(255, 255, 255, 0.7), rgba(255, 255, 255, 0.5));
}

.tray-area {
  margin-left: auto;
  width: 333px;
  display: flex;
  align-items: center;
  color: #fff;
  position: relative;
}

.lang {
  width: 28px;
  font-size: 11px;
  color: #dce8f4;
  margin-top: -6px;
}

.sys {
  width: 15px;
  height: 15px;
  margin-right: 7.500px;
  flex: none;
}

.clock {
  margin-left: 1px;
  width: 60px;
  text-align: center;
  font-size: 11px;
  line-height: 16px;
  white-space: nowrap;
}

.show-desktop {
  margin-left: auto;
  width: 11px;
  height: 100%;
  background: rgba(255, 255, 255, 0.16);
  border-left: 1px solid rgba(255, 255, 255, 0.3);
  box-sizing: border-box;
}

.spotlight {
  position: absolute;
  left: 617px;
  top: 231px;
  width: 80px;
  height: 80px;
  border-radius: 50%;
  background: #ffff00;
  mix-blend-mode: multiply;
}

.pointer {
  position: absolute;
  left: 657px;
  top: 270px;
  width: 13px;
  height: 19px;
}
</style>
